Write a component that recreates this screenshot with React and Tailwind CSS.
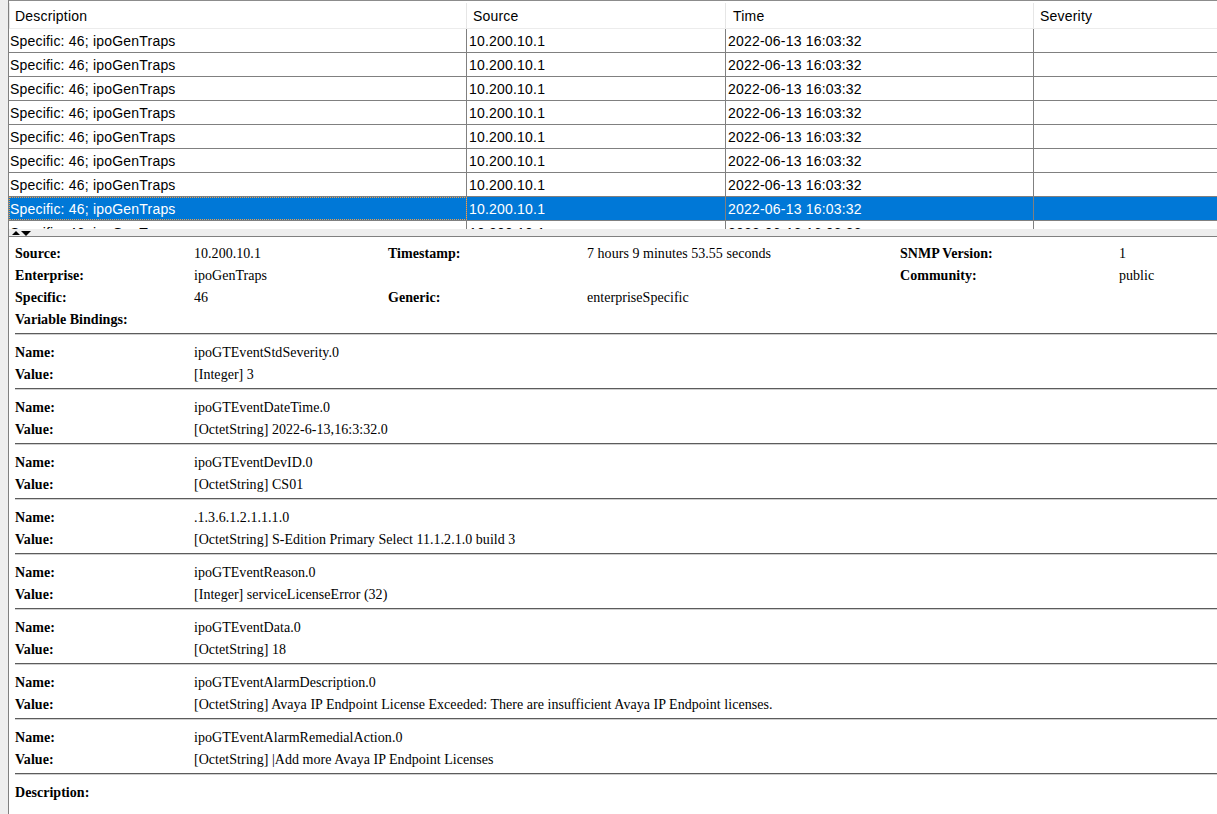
import React from "react";

const rows = Array.from({ length: 9 }, (_, i) => i);

const bindings = [
  ["ipoGTEventStdSeverity.0", "[Integer] 3"],
  ["ipoGTEventDateTime.0", "[OctetString] 2022-6-13,16:3:32.0"],
  ["ipoGTEventDevID.0", "[OctetString] CS01"],
  [".1.3.6.1.2.1.1.1.0", "[OctetString] S-Edition Primary Select 11.1.2.1.0 build 3"],
  ["ipoGTEventReason.0", "[Integer] serviceLicenseError (32)"],
  ["ipoGTEventData.0", "[OctetString] 18"],
  [
    "ipoGTEventAlarmDescription.0",
    "[OctetString] Avaya IP Endpoint License Exceeded: There are insufficient Avaya IP Endpoint licenses.",
  ],
  ["ipoGTEventAlarmRemedialAction.0", "[OctetString] |Add more Avaya IP Endpoint Licenses"],
];

function Sep() {
  return (
    <div>
      <div className="h-[1px] bg-[#5c5c5c]" />
      <div className="h-[1px] bg-[#d0d0d0]" />
    </div>
  );
}

function Row({ cells }) {
  return (
    <div className="grid grid-cols-[179px_194px_199px_313px_219px_1fr] h-[22px] pt-[2px] items-center whitespace-nowrap">
      {cells.map((c, i) => (
        <div key={i} className={i % 2 === 0 ? "font-bold" : ""}>
          {c}
        </div>
      ))}
    </div>
  );
}

export default function App() {
  return (
    <div className="h-[814px] w-[1217px] overflow-hidden flex bg-white">
      <div className="w-[8px] bg-[#eeeeee] shrink-0" />
      <div className="flex-1 flex flex-col border-l border-[#808080] min-w-0">
        {/* Table */}
        <div
          className="h-[229px] overflow-hidden border-t border-[#8c8c8c] text-[14px] text-black leading-none tracking-[0.2px]"
          style={{ fontFamily: '"Liberation Sans", Arial, sans-serif' }}
        >
          <div className="flex h-[28px] border-b border-[#ececec] pt-[2px]">
            <div className="w-[458px] border-r border-[#e6e6e6] border-l flex items-center pl-[5px]">Description</div>
            <div className="w-[259px] border-r border-[#e6e6e6] flex items-center pl-[6px]">Source</div>
            <div className="w-[308px] border-r border-[#e6e6e6] flex items-center pl-[7px]">Time</div>
            <div className="flex-1 flex items-center pl-[6px]">Severity</div>
          </div>
          {rows.map((i) => {
            const sel = i === 7;
            return (
              <div
                key={i}
                className={
                  "flex h-[24px] border-b border-[#808080] " + (sel ? "bg-[#0078d7] text-white" : "")
                }
              >
                <div
                  className={
                    "w-[458px] border-r border-[#808080] flex items-center pl-[1px] " +
                    (sel ? "outline outline-1 outline-dotted outline-[#f0a04b] -outline-offset-1" : "")
                  }
                >
                  Specific: 46; ipoGenTraps
                </div>
                <div className="w-[259px] border-r border-[#808080] flex items-center pl-[2px]">10.200.10.1</div>
                <div className="w-[308px] border-r border-[#808080] flex items-center pl-[2px]">2022-06-13 16:03:32</div>
                <div className="flex-1" />
              </div>
            );
          })}
        </div>
        {/* Splitter */}
        <div className="h-[8px] bg-[#eeeeee] border-b border-[#808080] flex items-start pl-[3px] gap-[1px] shrink-0">
          <svg width="8" height="6" viewBox="0 0 8 6" className="mt-[1px]">
            <polygon points="0,5 4,1 8,5" fill="#000" />
          </svg>
          <svg width="10" height="6" viewBox="0 0 10 6" className="mt-[1px]">
            <polygon points="0,1 10,1 5,6" fill="#000" />
          </svg>
        </div>
        {/* Details */}
        <div
          className="flex-1 pl-[6px] pt-[5px] text-[14px] text-black leading-none tracking-[0.04px]"
          style={{ fontFamily: '"Liberation Serif", "Times New Roman", serif' }}
        >
          <Row cells={["Source:", "10.200.10.1", "Timestamp:", "7 hours 9 minutes 53.55 seconds", "SNMP Version:", "1"]} />
          <Row cells={["Enterprise:", "ipoGenTraps", "", "", "Community:", "public"]} />
          <Row cells={["Specific:", "46", "Generic:", "enterpriseSpecific", "", ""]} />
          <div className="h-[22px] pt-[2px] flex items-center font-bold">Variable Bindings:</div>
          <div className="mt-[3px]">
            {bindings.map(([n, v], i) => (
              <div key={i}>
                <Sep />
                <div className="pt-[6px] pb-[3px]">
                  <div className="grid grid-cols-[179px_1fr] h-[22px] pt-[2px] items-center whitespace-nowrap">
                    <div className="font-bold">Name:</div>
                    <div>{n}</div>
                  </div>
                  <div className="grid grid-cols-[179px_1fr] h-[22px] pt-[2px] items-center whitespace-nowrap">
                    <div className="font-bold">Value:</div>
                    <div>{v}</div>
                  </div>
                </div>
              </div>
            ))}
            <Sep />
            <div className="h-[22px] pt-[2px] flex items-center font-bold mt-[6px]">Description:</div>
          </div>
        </div>
      </div>
    </div>
  );
}
